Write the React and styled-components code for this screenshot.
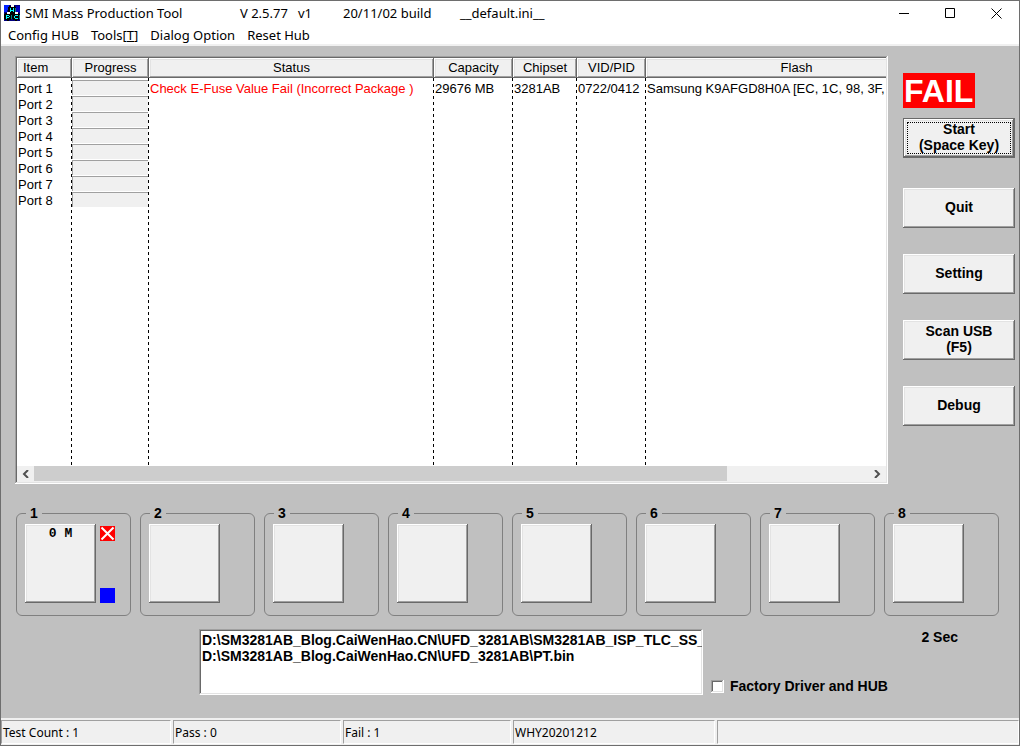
import { useState } from "react";
import styled, { createGlobalStyle, css } from "styled-components";

const GlobalStyle = createGlobalStyle`
  * {
    box-sizing: border-box;
  }

  body {
    margin: 0;
    color: #000;
    font-family: "Liberation Sans", Arial, sans-serif;
    font-size: 13px;
    line-height: 16px;
  }

  button,
  input,
  textarea {
    margin: 0;
    padding: 0;
    border: 0;
    border-radius: 0;
    font: inherit;
    color: inherit;
  }
`;

const raised = css`
  box-shadow: inset -1px -1px #696969, inset 1px 1px #fff,
    inset -2px -2px #a0a0a0, inset 2px 2px #e3e3e3;
`;

const sunken = css`
  box-shadow: inset -1px -1px #fff, inset 1px 1px #a0a0a0,
    inset -2px -2px #e3e3e3, inset 2px 2px #696969;
`;

const Window = styled.div`
  display: flex;
  flex-direction: column;
  min-height: 100vh;
  border: 1px solid #6e6e6e;
  background: #c0c0c0;
`;

const TitleBar = styled.header`
  display: flex;
  align-items: center;
  height: 24px;
  padding-left: 3px;
  background: #fff;
  font-family: "Noto Sans", sans-serif;
`;

const Title = styled.h1`
  display: grid;
  grid-template-columns: 215px 58px 45px 117px auto;
  flex: 1;
  margin: 0 0 0 5px;
  font-size: inherit;
  font-weight: normal;
  white-space: nowrap;
`;

const CaptionButton = styled.button`
  display: flex;
  align-items: center;
  justify-content: center;
  width: 46px;
  height: 24px;
  background: transparent;

  &:hover {
    background: #e5e5e5;
  }
`;

const MenuBar = styled.nav`
  display: flex;
  height: 21px;
  padding-left: 1px;
  background: #fff;
  border-bottom: 2px solid #f0f0f0;
  font-family: "Noto Sans", sans-serif;

  button {
    padding: 0 6px;
    background: transparent;
    white-space: nowrap;

    &:hover {
      background: #e5f3ff;
    }
  }
`;

const Main = styled.main`
  display: flex;
  flex: 1;
  flex-direction: column;
  padding-top: 10px;
`;

const Top = styled.section`
  display: flex;
  gap: 15px;
  padding: 0 4px 0 14px;
`;

const ListView = styled.div`
  display: flex;
  flex: 1;
  flex-direction: column;
  min-width: 0;
  height: 428px;
  padding: 2px;
  background: #fff;
  ${sunken}
`;

const ListBody = styled.div`
  flex: 1;
  overflow: hidden;
`;

const line = (x) =>
  `linear-gradient(#000 50%, transparent 50%) ${x}px 2px / 1px 6px repeat-y`;

const Table = styled.table`
  width: 930px;
  height: 100%;
  table-layout: fixed;
  border-collapse: separate;
  border-spacing: 0;
  background: ${[54, 131, 416, 495, 559, 628].map(line).join(", ")};

  th,
  td {
    padding: 0;
    white-space: nowrap;
  }

  th {
    height: 20px;
    background: #f0f0f0;
    font-size: 13px;
    font-weight: normal;
    ${raised}
  }

  th:first-child {
    padding-left: 6px;
    text-align: left;
  }

  td {
    height: 16px;
    padding-left: 1px;
    text-align: left;
  }

  tbody tr:first-child td {
    height: 19px;
    padding-top: 3px;
  }

  tbody tr:last-child td {
    height: auto;
  }
`;

const StatusText = styled.span`
  color: ${({ $failed }) => ($failed ? "#f00" : "#000")};
`;

const Progress = styled.div`
  height: 15px;
  margin: -1px 1px 2px -1px;
  border-top: 1px solid #a0a0a0;
  border-left: 1px solid #a0a0a0;
  background: #f0f0f0;
`;

const ScrollBar = styled.div`
  display: flex;
  height: 16px;
  background: #f0f0f0;

  button {
    display: flex;
    align-items: center;
    justify-content: center;
    width: 17px;
    background: #f0f0f0;
  }
`;

const Track = styled.div`
  flex: 1;
`;

const Thumb = styled.div`
  width: 83%;
  height: 15px;
  background: #cdcdcd;
`;

const Side = styled.aside`
  display: flex;
  flex-direction: column;
  width: 112px;
  padding-top: 17px;
`;

const Result = styled.output`
  align-self: flex-start;
  height: 35px;
  margin-bottom: 10px;
  padding: 0 2px 0 1px;
  background: #f00;
  color: #fff;
  font-size: 32px;
  font-weight: bold;
  line-height: 37px;
`;

const Actions = styled.div`
  display: flex;
  flex-direction: column;
  gap: 26px;
`;

const PushButton = styled.button`
  height: 40px;
  padding-bottom: 2px;
  background: #f0f0f0;
  font-size: 14px;
  font-weight: bold;
  white-space: pre-line;
  ${raised}

  ${({ $primary }) =>
    $primary &&
    css`
      margin-bottom: 4px;
      border: 1px solid #696969;
      outline: 1px dotted #000;
      outline-offset: -5px;
    `}
`;

const Slots = styled.section`
  display: grid;
  grid-template-columns: repeat(8, 1fr);
  gap: 9px;
  padding: 21px 20px 0 15px;
`;

const Slot = styled.fieldset`
  display: flex;
  gap: 4px;
  min-width: 0;
  margin: 0;
  padding: 3px 0 12px 8px;
  border: 1px solid #808080;
  border-radius: 6px;

  legend {
    margin-left: 1px;
    padding: 0 4px;
    font-size: 14px;
    font-weight: bold;
  }
`;

const Device = styled.button`
  display: flex;
  justify-content: center;
  width: 71px;
  height: 79px;
  padding-top: 2px;
  background: #f0f0f0;
  font-family: "Liberation Mono", monospace;
  font-weight: bold;
  ${raised}
`;

const Marks = styled.div`
  display: flex;
  flex-direction: column;
  justify-content: space-between;
  padding-top: 2px;
`;

const BlueMark = styled.span`
  width: 15px;
  height: 15px;
  background: #00f;
`;

const Bottom = styled.section`
  display: flex;
  gap: 8px;
  padding: 13px 19px 23px 198px;
  font-size: 14px;
  font-weight: bold;
`;

const Paths = styled.textarea`
  flex: 0 1 504px;
  min-width: 0;
  height: 66px;
  padding: 2px;
  border: 1px solid;
  border-color: #a0a0a0 #fff #fff #a0a0a0;
  background: #fff;
  box-shadow: inset -1px -1px #e3e3e3, inset 1px 1px #696969;
  white-space: pre;
  overflow: hidden;
  resize: none;
`;

const Option = styled.label`
  display: flex;
  align-items: center;
  align-self: flex-end;
  gap: 6px;
  padding-bottom: 1px;
  white-space: nowrap;

  input {
    width: 13px;
    height: 13px;
    appearance: none;
    background: #fff;
    ${sunken}
  }

  input:checked {
    background: #000;
    background-clip: content-box;
    padding: 3px;
  }
`;

const Elapsed = styled.span`
  margin-left: auto;
  padding-right: 42px;
  white-space: nowrap;
`;

const StatusBar = styled.footer`
  display: grid;
  grid-template-columns: 170px 168px 168px 202px 1fr;
  gap: 2px;
  padding: 2px 0 1px;
  background: #f0f0f0;
  font-family: "Noto Sans", sans-serif;
  font-size: 12px;
`;

const Panel = styled.div`
  height: 24px;
  padding-left: 1px;
  border: 1px solid;
  border-color: #a0a0a0 #fff #fff #a0a0a0;
  line-height: 23px;
`;

const AppIcon = () => (
  <svg width="16" height="16" viewBox="0 0 16 16" shapeRendering="crispEdges">
    <path fill="#000080" d="M0 0h16v16H0z" />
    <path fill="#0020ff" d="M0 0h5v5H0zM0 5h3v2H0z" />
    <path fill="#0000c0" d="M12 1h4v6h-4z" />
    <path fill="#000" d="M4 2l4-2 4 2v5l-4 2-4-2zM0 9l4-2 4 2v5l-4 2-4-2zM8 9l4-2 4 2v5l-4 2-4-2z" />
    <path fill="#fff" d="M5 1l3-1 3 1-3 1zM1 8l3-1 3 1-3 1zM9 8l3-1 3 1-3 1z" />
    <path fill="#0ff" d="M6 3h1v4H6zM9 3h1v4H9zM7 5h2v1H7z" />
    <path fill="#0ff" d="M2 10h1v4H2zM3 10h2v1H3zM5 11h1v1H5zM3 12h2v1H3z" />
    <path fill="#0ff" d="M11 10h3v1h-3zM10 11h1v2h-1zM11 13h3v1h-3z" />
    <path fill="#008080" d="M11 3h1v4h-1zM7 10h1v4H7zM15 10h1v4h-1z" />
  </svg>
);

const FailMark = () => (
  <svg width="15" height="15" viewBox="0 0 15 15">
    <path fill="#f00" d="M0 0h15v15H0z" />
    <path stroke="#fff" strokeWidth="2" d="M1.5 1.5l12 12M13.5 1.5l-12 12" />
  </svg>
);

const Chevron = ({ d }) => (
  <svg width="7" height="8" viewBox="0 0 7 8">
    <path fill="none" stroke="#505050" strokeWidth="2" d={d} />
  </svg>
);

const columns = [
  ["Item", 55],
  ["Progress", 77],
  ["Status", 285],
  ["Capacity", 79],
  ["Chipset", 64],
  ["VID/PID", 69],
  ["Flash", 301],
];

const ports = [
  {
    status: "Check E-Fuse Value Fail (Incorrect Package )",
    failed: true,
    capacity: "29676 MB",
    chipset: "3281AB",
    id: "0722/0412",
    flash: "Samsung K9AFGD8H0A [EC, 1C, 98, 3F,",
  },
  {}, {}, {}, {}, {}, {}, {},
];

const paths = [
  "D:\\SM3281AB_Blog.CaiWenHao.CN\\UFD_3281AB\\SM3281AB_ISP_TLC_SS_3",
  "D:\\SM3281AB_Blog.CaiWenHao.CN\\UFD_3281AB\\PT.bin",
].join("\n");

const App = () => {
  const [factory, setFactory] = useState(false);

  return (
    <Window>
      <GlobalStyle />
      <TitleBar>
        <AppIcon />
        <Title>
          <span>SMI Mass Production Tool</span>
          <span>V 2.5.77</span>
          <span>v1</span>
          <span>20/11/02 build</span>
          <span>__default.ini__</span>
        </Title>
        <CaptionButton aria-label="Minimize">
          <svg width="11" height="11">
            <path stroke="#000" d="M0 5.5h10" />
          </svg>
        </CaptionButton>
        <CaptionButton aria-label="Maximize">
          <svg width="11" height="11">
            <path fill="none" stroke="#000" d="M.5 .5h9v9h-9z" />
          </svg>
        </CaptionButton>
        <CaptionButton aria-label="Close">
          <svg width="11" height="11">
            <path stroke="#000" d="M.5 .5l10 10M10.5 .5l-10 10" />
          </svg>
        </CaptionButton>
      </TitleBar>
      <MenuBar>
        <button>Config HUB</button>
        <button>Tools[<u>T</u>]</button>
        <button>Dialog Option</button>
        <button>Reset Hub</button>
      </MenuBar>

      <Main>
        <Top>
          <ListView>
            <ListBody>
              <Table>
                <colgroup>
                  {columns.map(([name, width]) => (
                    <col key={name} style={{ width }} />
                  ))}
                </colgroup>
                <thead>
                  <tr>
                    {columns.map(([name]) => (
                      <th key={name}>{name}</th>
                    ))}
                  </tr>
                </thead>
                <tbody>
                  {ports.map((port, i) => (
                    <tr key={i}>
                      <td>Port {i + 1}</td>
                      <td><Progress /></td>
                      <td>
                        <StatusText $failed={port.failed}>{port.status}</StatusText>
                      </td>
                      <td>{port.capacity}</td>
                      <td>{port.chipset}</td>
                      <td>{port.id}</td>
                      <td>{port.flash}</td>
                    </tr>
                  ))}
                  <tr>
                    <td colSpan={7} />
                  </tr>
                </tbody>
              </Table>
            </ListBody>
            <ScrollBar>
              <button aria-label="Scroll left"><Chevron d="M6 0L2 4l4 4" /></button>
              <Track><Thumb /></Track>
              <button aria-label="Scroll right"><Chevron d="M1 0l4 4-4 4" /></button>
            </ScrollBar>
          </ListView>

          <Side>
            <Result>FAIL</Result>
            <Actions>
              <PushButton $primary>{"Start\n(Space Key)"}</PushButton>
              <PushButton>Quit</PushButton>
              <PushButton>Setting</PushButton>
              <PushButton>{"Scan USB\n(F5)"}</PushButton>
              <PushButton>Debug</PushButton>
            </Actions>
          </Side>
        </Top>

        <Slots>
          {ports.map((port, i) => (
            <Slot key={i}>
              <legend>{i + 1}</legend>
              <Device aria-label={`Device ${i + 1}`}>{port.failed && "0 M"}</Device>
              {port.failed && (
                <Marks>
                  <FailMark />
                  <BlueMark />
                </Marks>
              )}
            </Slot>
          ))}
        </Slots>

        <Bottom>
          <Paths aria-label="Firmware files" readOnly value={paths} />
          <Option>
            <input
              type="checkbox"
              checked={factory}
              onChange={(e) => setFactory(e.target.checked)}
            />
            Factory Driver and HUB
          </Option>
          <Elapsed>2 Sec</Elapsed>
        </Bottom>
      </Main>

      <StatusBar>
        <Panel>Test Count : 1</Panel>
        <Panel>Pass : 0</Panel>
        <Panel>Fail : 1</Panel>
        <Panel>WHY20201212</Panel>
        <Panel />
      </StatusBar>
    </Window>
  );
};

export default App;
